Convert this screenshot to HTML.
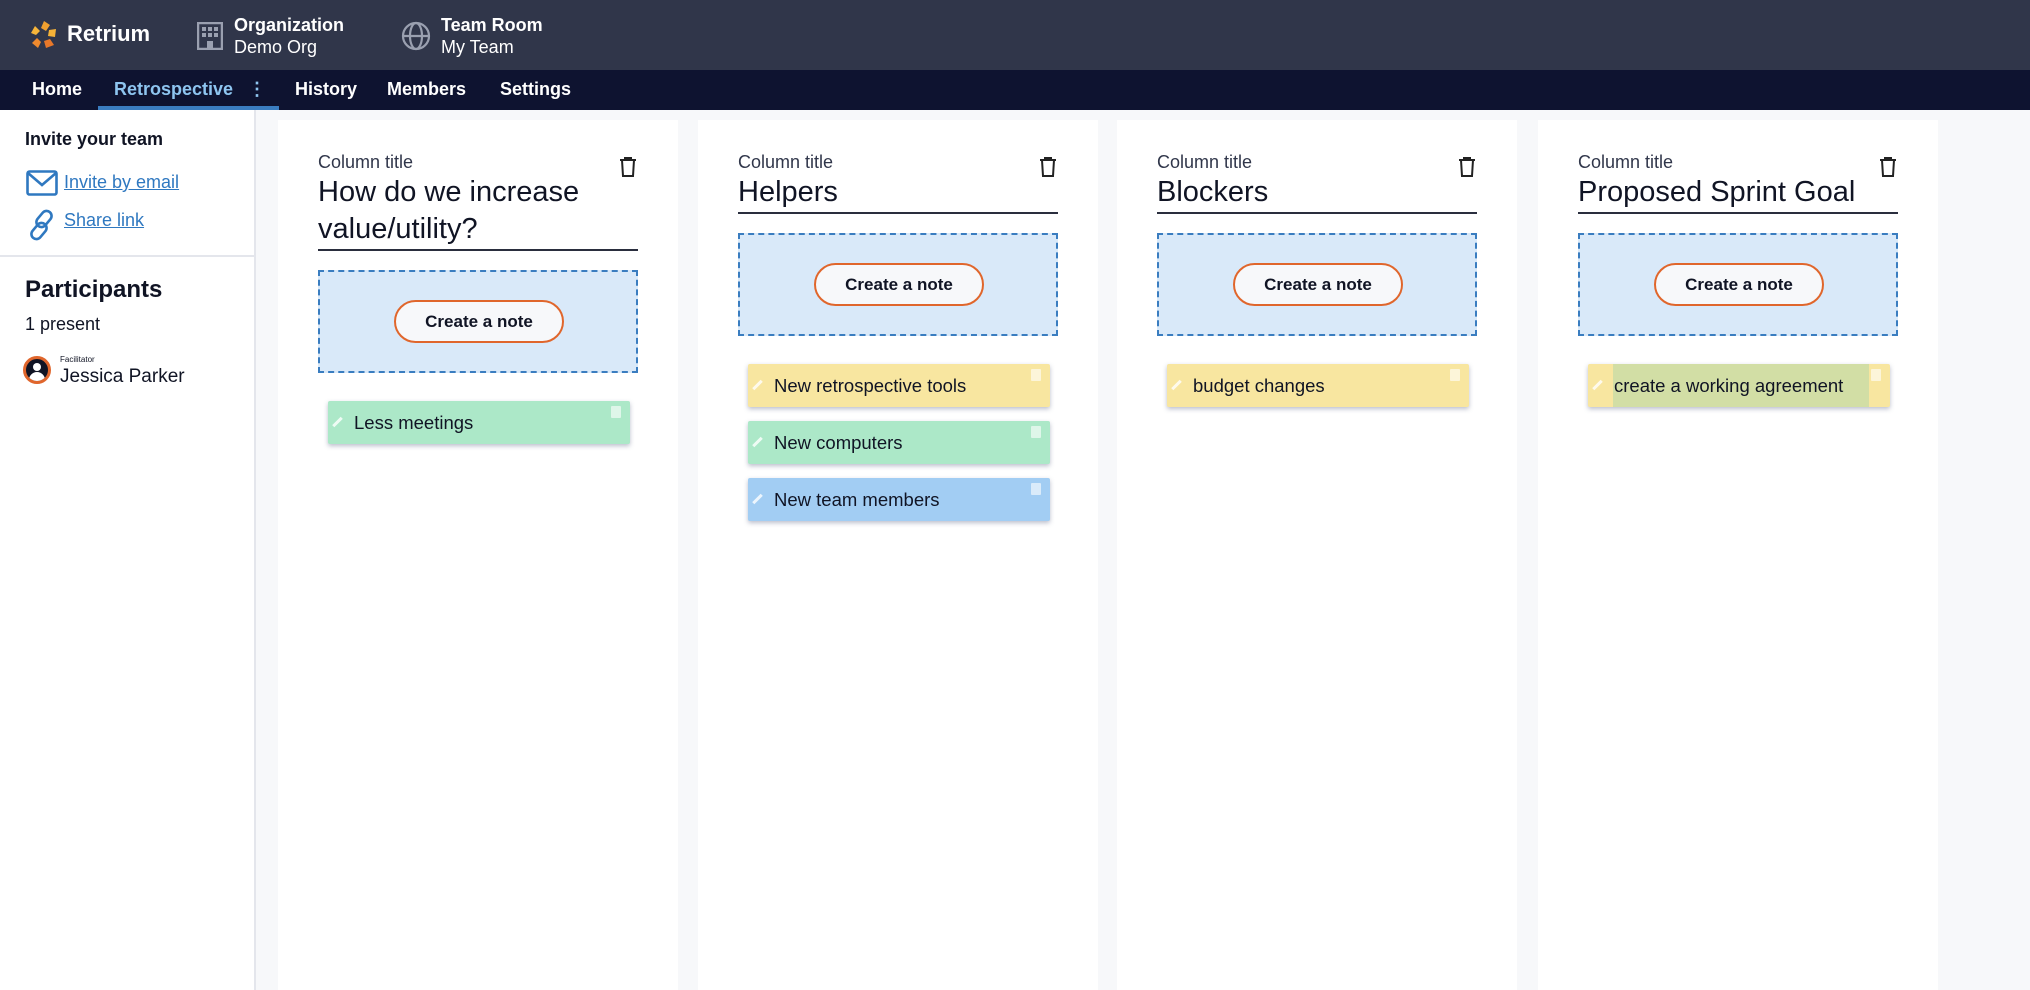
<!DOCTYPE html>
<html><head><meta charset="utf-8"><style>
*{box-sizing:border-box;margin:0;padding:0}
body{width:2030px;height:990px;overflow:hidden;background:#f7f8fa;font-family:"Liberation Sans",sans-serif;color:#101424;position:relative}
.hdr{position:absolute;left:0;top:0;width:2030px;height:70px;background:#30364a;color:#fff}
.nav{position:absolute;left:0;top:70px;width:2030px;height:40px;background:#0e1330;color:#fff;font-weight:bold;font-size:18px}
.nav span{position:absolute;top:9px}
.side{position:absolute;left:0;top:110px;width:256px;height:880px;background:#fff;border-right:2px solid #e4e6ec}
.a{position:absolute}
.col{position:absolute;top:120px;width:400px;height:870px;background:#fff}
.lbl{position:absolute;left:40px;top:32px;font-size:18px;color:#30364a}
.ttl{position:absolute;left:40px;top:54px;width:320px;font-size:29px;line-height:37px;border-bottom:2px solid #2a2e3e;padding-bottom:1px}
.trash{position:absolute;left:340px;top:36px}
.drop{position:absolute;left:40px;width:320px;height:103px;background:#d9e9f9;border:2px dashed #3a7dc0}
.btn{position:absolute;left:74px;top:28px;width:170px;height:43px;border:2px solid #e0662c;border-radius:22px;background:#f7f8fa;font-weight:bold;font-size:17px;text-align:center;line-height:39px;color:#101424}
.note{position:absolute;left:50px;width:302px;height:43px;box-shadow:0 2px 5px rgba(60,70,110,.35);font-size:18.5px;line-height:43px;padding-left:26px;border-radius:2px}
.note .p{position:absolute;left:8px;top:15px;width:3px;height:12px;background:#fff;opacity:.8;transform:rotate(45deg)}
.note .t{position:absolute;right:9px;top:5px;width:10px;height:12px;background:#fff;opacity:.6;border-radius:1px}
</style></head><body>
<div class="hdr">
 <svg class="a" style="left:28px;top:19px" width="32" height="32" viewBox="0 0 32 32"><g fill="#f0a030"><path d="M16 2l6 4-4 6-5-3z"/><path d="M28 10l-1 8-7-1 1-6z" fill="#f5b238"/><path d="M26 26l-8 3-2-7 6-2z" fill="#e8782a"/><path d="M10 29l-6-5 5-5 4 4z" fill="#ef8a2e"/><path d="M3 14l4-7 5 5-4 4z" fill="#f7b53a"/></g><circle cx="16" cy="16" r="3" fill="#30364a"/></svg>
 <div class="a" style="left:67px;top:21px;font-size:22px;font-weight:bold">Retrium</div>
 <svg class="a" style="left:197px;top:22px" width="26" height="28" viewBox="0 0 26 28"><rect x="1" y="1" width="24" height="26" fill="none" stroke="#9aa0b0" stroke-width="2.5"/><g fill="#9aa0b0"><rect x="5" y="5" width="4" height="4"/><rect x="11" y="5" width="4" height="4"/><rect x="17" y="5" width="4" height="4"/><rect x="5" y="11" width="4" height="4"/><rect x="11" y="11" width="4" height="4"/><rect x="17" y="11" width="4" height="4"/><rect x="10" y="19" width="6" height="8"/></g></svg>
 <div class="a" style="left:234px;top:14px;font-size:18px;font-weight:bold;line-height:22px">Organization<br><span style="font-weight:normal">Demo Org</span></div>
 <svg class="a" style="left:401px;top:21px" width="30" height="30" viewBox="0 0 30 30" fill="none" stroke="#9aa0b0" stroke-width="2.2"><circle cx="15" cy="15" r="13"/><ellipse cx="15" cy="15" rx="6" ry="13"/><line x1="2" y1="15" x2="28" y2="15"/></svg>
 <div class="a" style="left:441px;top:14px;font-size:18px;font-weight:bold;line-height:22px">Team Room<br><span style="font-weight:normal">My Team</span></div>
</div>
<div class="nav">
 <span style="left:32px">Home</span>
 <span style="left:114px;color:#8ec5f0">Retrospective</span>
 <span style="left:248px;color:#8ec5f0">⋮</span>
 <span style="left:295px">History</span>
 <span style="left:387px">Members</span>
 <span style="left:500px">Settings</span>
 <div class="a" style="left:98px;top:36px;width:181px;height:4px;background:#3a7dc0"></div>
</div>
<div class="side">
 <div class="a" style="left:25px;top:19px;font-size:18px;font-weight:bold">Invite your team</div>
 <svg class="a" style="left:26px;top:60px" width="32" height="26" viewBox="0 0 32 26" fill="none" stroke="#2f78c0" stroke-width="2.6"><rect x="1.5" y="1.5" width="29" height="23" rx="2"/><path d="M2 3l14 12 14-12"/></svg>
 <div class="a" style="left:64px;top:62px;font-size:18px;color:#2f78c0;text-decoration:underline">Invite by email</div>
 <svg class="a" style="left:26px;top:98px" width="32" height="34" viewBox="0 0 32 34" fill="none" stroke="#2f78c0" stroke-width="2.6"><rect x="13" y="2" width="10" height="18" rx="5" transform="rotate(40 18 11)"/><rect x="8" y="14" width="10" height="18" rx="5" transform="rotate(40 13 23)"/></svg>
 <div class="a" style="left:64px;top:100px;font-size:18px;color:#2f78c0;text-decoration:underline">Share link</div>
 <div class="a" style="left:0;top:145px;width:256px;height:2px;background:#e4e6ec"></div>
 <div class="a" style="left:25px;top:166px;font-size:24px;font-weight:bold">Participants</div>
 <div class="a" style="left:25px;top:204px;font-size:18px">1 present</div>
 <div class="a" style="left:23px;top:246px;width:28px;height:28px;border-radius:50%;border:3px solid #e0662c;background:#101424;overflow:hidden"><div class="a" style="left:7px;top:4px;width:8px;height:8px;border-radius:50%;background:#fff"></div><div class="a" style="left:3px;top:13px;width:16px;height:12px;border-radius:8px 8px 0 0;background:#fff"></div></div>
 <div class="a" style="left:60px;top:245px;font-size:8px">Facilitator</div>
 <div class="a" style="left:60px;top:256px;font-size:19px">Jessica Parker</div>
</div>

<div class="col" style="left:278px">
 <div class="lbl">Column title</div>
 <svg class="trash" width="20" height="22" viewBox="0 0 20 22" fill="none" stroke="#222" stroke-width="2"><path d="M2 4h16M7 4V2h6v2M4 4l1 16h10l1-16"/></svg>
 <div class="ttl">How do we increase value/utility?</div>
 <div class="drop" style="top:150px"><div class="btn">Create a note</div></div>
 <div class="note" style="top:281px;background:#ace8c8"><div class="p"></div>Less meetings<div class="t"></div></div>
</div>
<div class="col" style="left:698px">
 <div class="lbl">Column title</div>
 <svg class="trash" width="20" height="22" viewBox="0 0 20 22" fill="none" stroke="#222" stroke-width="2"><path d="M2 4h16M7 4V2h6v2M4 4l1 16h10l1-16"/></svg>
 <div class="ttl">Helpers</div>
 <div class="drop" style="top:113px"><div class="btn">Create a note</div></div>
 <div class="note" style="top:244px;background:#f8e6a0"><div class="p"></div>New retrospective tools<div class="t"></div></div>
 <div class="note" style="top:301px;background:#ace8c8"><div class="p"></div>New computers<div class="t"></div></div>
 <div class="note" style="top:358px;background:#a2cdf3"><div class="p"></div>New team members<div class="t"></div></div>
</div>
<div class="col" style="left:1117px">
 <div class="lbl">Column title</div>
 <svg class="trash" width="20" height="22" viewBox="0 0 20 22" fill="none" stroke="#222" stroke-width="2"><path d="M2 4h16M7 4V2h6v2M4 4l1 16h10l1-16"/></svg>
 <div class="ttl">Blockers</div>
 <div class="drop" style="top:113px"><div class="btn">Create a note</div></div>
 <div class="note" style="top:244px;background:#f8e6a0"><div class="p"></div>budget changes<div class="t"></div></div>
</div>
<div class="col" style="left:1538px">
 <div class="lbl">Column title</div>
 <svg class="trash" width="20" height="22" viewBox="0 0 20 22" fill="none" stroke="#222" stroke-width="2"><path d="M2 4h16M7 4V2h6v2M4 4l1 16h10l1-16"/></svg>
 <div class="ttl">Proposed Sprint Goal</div>
 <div class="drop" style="top:113px"><div class="btn">Create a note</div></div>
 <div class="note" style="top:244px;background:#f8e6a0"><div class="a" style="left:25px;top:0;width:256px;height:43px;background:#d2dea5"></div><div class="p"></div><span style="position:relative">create a working agreement</span><div class="t"></div></div>
</div>
</body></html>
